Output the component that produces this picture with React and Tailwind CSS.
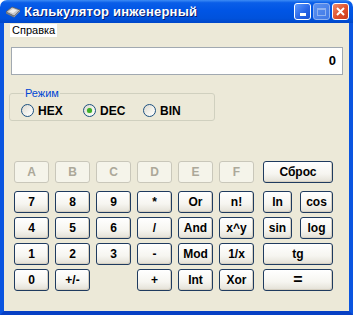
import React from 'react';

const font = "font-['Liberation_Sans',Arial,sans-serif]";

const Btn = ({ label, disabled, className = '' }) => (
  <button
    className={
      'h-[22px] rounded-[3px] border text-[12px] font-bold leading-none flex items-center justify-center ' +
      (disabled
        ? 'border-[#c9c7ba] bg-[#f5f4ea] text-[#aca899] '
        : 'border-[#1f3b5f] bg-[linear-gradient(to_bottom,#ffffff_0%,#f6f5f0_60%,#e3e0d6_100%)] text-black shadow-[inset_-1px_-1px_0_#d6d0c2] ') +
      className
    }
  >
    {label}
  </button>
);

const Radio = ({ label, checked, width }) => (
  <div className="flex items-center gap-[4px]" style={{ width }}>
    <span className="w-[13px] h-[13px] rounded-full border border-[#1c5180] bg-[linear-gradient(135deg,#dcd9cf_0%,#f4f3ee_60%,#ffffff_100%)] flex items-center justify-center">
      {checked && <span className="w-[5px] h-[5px] rounded-full bg-[#3fae2a] shadow-[0_0_1px_#7ad35f]" />}
    </span>
    <span className="text-[12px] font-bold text-black leading-none">{label}</span>
  </div>
);

const TitleIcon = () => (
  <svg width="16" height="14" viewBox="0 0 16 14">
    <path d="M1 7 L7 2 L15 5 L9 11 Z" fill="#c8c8c8" stroke="#5a5a5a" strokeWidth="0.8" />
    <path d="M1 7 L9 11 L9 12.5 L1 8.5 Z" fill="#7c7c7c" />
    <path d="M9 11 L15 5 L15 6.5 L9 12.5 Z" fill="#9a9a9a" />
    <path d="M4 6.5 L8 3.8 L12 5.3 L8 8.3 Z" fill="#efefef" />
  </svg>
);

export default function App() {
  const rows = [
    ['7', '8', '9', '*', 'Or', 'n!', 'ln', 'cos'],
    ['4', '5', '6', '/', 'And', 'x^y', 'sin', 'log'],
  ];

  return (
    <div className={`w-[353px] h-[315px] bg-white ${font}`}>
      <div className="w-full h-full flex flex-col rounded-t-[7px] overflow-hidden">
        {/* title bar */}
        <div className="h-[23px] shrink-0 flex items-center pl-[5px] pr-[4px] bg-[linear-gradient(to_bottom,#3d8cf5_0%,#0a5ee8_12%,#0055e5_45%,#0052dc_80%,#0046c8_100%)]">
          <TitleIcon />
          <span className="ml-[3px] text-white text-[13px] font-bold tracking-[0.2px] [text-shadow:1px_1px_0_#0a1c6e]">
            Калькулятор инженерный
          </span>
          <div className="ml-auto flex gap-[2px]">
            <div className="w-[17px] h-[17px] rounded-[3px] border border-white bg-[linear-gradient(135deg,#5f9bff_0%,#2663e6_60%,#1a52d2_100%)] flex items-end justify-center pb-[3px]">
              <span className="w-[6px] h-[3px] bg-white" />
            </div>
            <div className="w-[17px] h-[17px] rounded-[3px] border border-[#8fb2f0] bg-[linear-gradient(135deg,#5d92f0_0%,#3d77e6_100%)] flex items-center justify-center">
              <span className="w-[9px] h-[8px] border border-[#8fb2f0] border-t-2" />
            </div>
            <div className="w-[17px] h-[17px] rounded-[3px] border border-white bg-[linear-gradient(135deg,#ef8c6c_0%,#e0502b_55%,#c83a1c_100%)] flex items-center justify-center">
              <svg width="9" height="9" viewBox="0 0 9 9">
                <path d="M1 1 L8 8 M8 1 L1 8" stroke="white" strokeWidth="2" />
              </svg>
            </div>
          </div>
        </div>

        {/* body */}
        <div className="flex-1 flex flex-col bg-[#ece9d8] border-x-4 border-b-4 border-x-[#0a55e0] border-b-[#0740c4]">
          {/* menu */}
          <div className="h-[14px] flex items-center pl-[6px]">
            <span className="bg-white px-[2px] h-[13px] leading-[13px] text-[11px] text-black">Справка</span>
          </div>

          {/* display */}
          <div className="mt-[10px] ml-[7px] w-[332px] h-[28px] bg-white border border-[#a1a9b1] flex items-center justify-end pr-[6px]">
            <span className="text-[13px] font-bold text-black">0</span>
          </div>

          {/* mode */}
          <fieldset className="mt-[12px] ml-[5px] w-[206px] h-[34px] border border-[#d0d0bf] rounded-[3px] pl-[11px] pt-[4px]">
            <legend className="ml-[3px] px-[1px] text-[11px] leading-[13px] text-[#0046d5]">Режим</legend>
            <div className="flex items-center">
              <Radio label="HEX" width={62} />
              <Radio label="DEC" checked width={60} />
              <Radio label="BIN" width={40} />
            </div>
          </fieldset>

          {/* keys */}
          <div className="mt-[40px] ml-[10px] grid grid-cols-[35px_35px_35px_35px_35px_35px_32px_35px] gap-x-[6px] gap-y-[4px]">
            {['A', 'B', 'C', 'D', 'E', 'F'].map((k) => (
              <Btn key={k} label={k} disabled />
            ))}
            <Btn label="Сброс" className="col-span-2 w-[70px] justify-self-end" />

            <div className="col-span-8 h-0" />

            {rows.map((r) =>
              r.map((k, i) => (
                <Btn
                  key={k}
                  label={k}
                  className={i === 6 ? 'w-[29px] justify-self-end' : i === 7 ? 'w-[33px] justify-self-end' : ''}
                />
              ))
            )}

            {['1', '2', '3', '-', 'Mod', '1/x'].map((k) => (
              <Btn key={k} label={k} />
            ))}
            <Btn label="tg" className="col-span-2 w-[70px] justify-self-end" />

            <Btn label="0" />
            <Btn label="+/-" />
            <div />
            <Btn label="+" />
            <Btn label="Int" />
            <Btn label="Xor" />
            <Btn label={<span className="text-[16px]">=</span>} className="col-span-2 w-[70px] justify-self-end" />
          </div>
        </div>
      </div>
    </div>
  );
}
